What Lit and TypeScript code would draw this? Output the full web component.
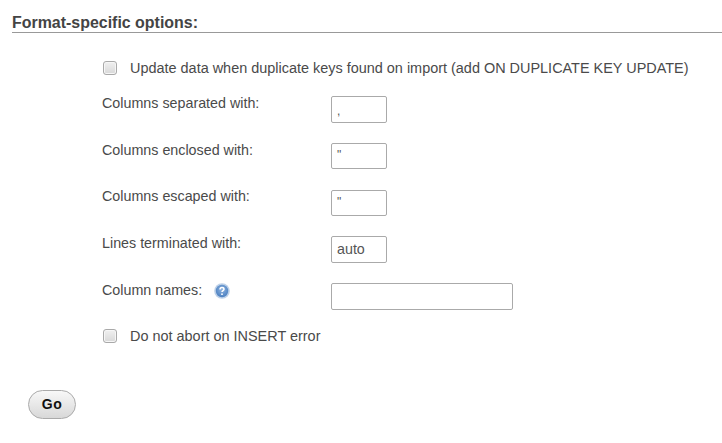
import { LitElement, html, css } from "lit";
import { customElement } from "lit/decorators.js";

@customElement("app-root")
export class AppRoot extends LitElement {
  static styles = css`
    :host { display: block; width: 722px; height: 443px; background: #fff; overflow: hidden;
      font-family: "Liberation Sans", Arial, sans-serif; color: #4a4a4a; font-size: 14.45px; }
    .legend { margin: 0 0 0 12px; padding-top: 14px; height: 18px; border-bottom: 1px solid #999;
      font-size: 15.95px; line-height: 18px; font-weight: bold; color: #444; }
    .form { padding: 27px 0 0 102px; }
    .check { display: flex; align-items: center; height: 16px; }
    .box { width: 12px; height: 12px; margin-right: 13px; margin-left: 1px; border: 1px solid #a9a9a9; border-radius: 3px;
      background: linear-gradient(#f0f0f0, #d8d8d8); box-shadow: inset 0 0 0 1px #f6f6f6; }
    .rows { display: flex; flex-direction: column; gap: 20.25px; padding-top: 20.2px; padding-bottom: 18.3px; }
    .row { display: grid; grid-template-columns: 229px auto; height: 26.5px; }
    .label { display: flex; align-items: flex-start; line-height: 16px; margin-top: -1.4px; font-size: 14.3px; }
    .input { box-sizing: border-box; width: 56px; height: 26.5px; border: 1px solid #aaa; border-radius: 2px;
      padding: 0 5px; font-size: 14.3px; color: #555; background: #fff; line-height: 25px; }
    .tiny { font-size: 12px; line-height: 22px; }
    .comma { line-height: 28px; }
    .wide { width: 182px; }
    .help { margin-left: 12px; margin-top: 1px; }
    .go { margin: 46px 0 0 28px; display: block; width: 48px; height: 29px; border: 1px solid #aaa; border-radius: 15px;
      background: linear-gradient(#f8f8f8, #d8d8d8); font: bold 14px "Liberation Sans", Arial, sans-serif; color: #111; padding: 0; letter-spacing: .5px; }
  `;

  render() {
    return html`
      <div class="legend">Format-specific options:</div>
      <div class="form">
        <div class="check"><span class="box"></span>Update data when duplicate keys found on import (add ON DUPLICATE KEY UPDATE)</div>
        <div class="rows">
          <div class="row"><span class="label">Columns separated with:</span><div class="input tiny comma">,</div></div>
          <div class="row"><span class="label">Columns enclosed with:</span><div class="input tiny">"</div></div>
          <div class="row"><span class="label">Columns escaped with:</span><div class="input tiny">"</div></div>
          <div class="row"><span class="label">Lines terminated with:</span><div class="input">auto</div></div>
          <div class="row"><span class="label">Column names:
            <svg class="help" width="16" height="16" viewBox="0 0 16 16">
              <defs><radialGradient id="g" cx=".5" cy=".4" r=".6"><stop offset="0" stop-color="#8fb4e0"/><stop offset="1" stop-color="#4a7fc0"/></radialGradient></defs>
              <circle cx="8" cy="8" r="7.8" fill="#bcd0e8"/><circle cx="8" cy="8" r="6.2" fill="url(#g)"/>
              <path d="M6 6.4C6 5.2 7 4.6 8 4.6s2 .6 2 1.7c0 1.3-2 1.4-2 2.8" fill="none" stroke="#fff" stroke-width="1.5"/><circle cx="8" cy="11.2" r=".9" fill="#fff"/>
            </svg></span><div class="input wide"></div></div>
        </div>
        <div class="check"><span class="box"></span>Do not abort on INSERT error</div>
      </div>
      <button class="go">Go</button>
    `;
  }
}
